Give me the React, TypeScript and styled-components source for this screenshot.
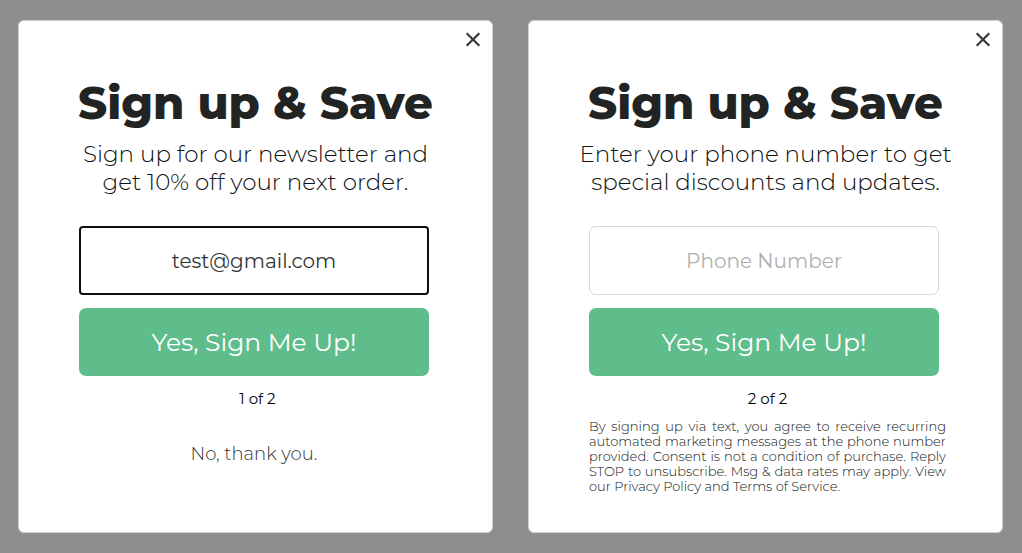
import React from "react";
import styled, { createGlobalStyle } from "styled-components";

const GlobalStyle = createGlobalStyle`
  *, *::before, *::after { box-sizing: border-box; }
  body {
    margin: 0;
    background: #8e8e8e;
    color: #222423;
    font-family: Montserrat, Inter, "Open Sans", sans-serif;
    font-weight: 300;
  }
`;

const Page = styled.main`
  display: grid;
  grid-template-columns: 1fr 1fr;
  gap: 35px;
  padding: 20px 19px 20px 18px;
`;

const Card = styled.section`
  display: flex;
  flex-direction: column;
  min-height: 513px;
  padding-bottom: 36px;
  background: #fff;
  border: 1px solid #d0d0d0;
  border-radius: 6px;
`;

const CardTop = styled.div`
  display: flex;
  justify-content: flex-end;
  padding: 10px 11px 0;
`;

const CloseButton = styled.button`
  display: flex;
  padding: 0;
  border: 0;
  background: none;
  color: #383838;
  cursor: pointer;
`;

const Title = styled.h1`
  margin: 28px 0 0;
  font-size: 45px;
  font-weight: 800;
  line-height: 56px;
  text-align: center;
  white-space: nowrap;
`;

const Subtitle = styled.p`
  margin: 9px 0 0;
  color: #101211;
  font-size: 23px;
  line-height: 28px;
  text-align: center;
  white-space: nowrap;
`;

const Body = styled.div`
  padding: 0 56px 0 60px;
`;

const Form = styled.form`
  display: flex;
  flex-direction: column;
  gap: 13px;
  margin: 30px 7px 0 0;
`;

const Field = styled.input<{ $active?: boolean }>`
  width: 100%;
  height: 69px;
  padding: 0 16px;
  border: ${(p) => (p.$active ? "2px solid #101010" : "1px solid #d8d8d8")};
  border-radius: ${(p) => (p.$active ? "4px" : "7px")};
  background: #fff;
  color: #333534;
  font: inherit;
  font-size: 20px;
  font-weight: 400;
  text-align: center;
  outline: none;

  &::placeholder {
    color: #b0b0b0;
    opacity: 1;
  }
`;

const SubmitButton = styled.button`
  height: 68px;
  border: 0;
  border-radius: 7px;
  background: #5fbd8c;
  color: #fff;
  font: inherit;
  font-size: 25px;
  font-weight: 400;
  cursor: pointer;
`;

const Step = styled.p`
  margin: 11px 0 0;
  color: #000;
  font-size: 15px;
  font-weight: 400;
  line-height: 24px;
  text-align: center;
`;

const DeclineRow = styled.div`
  display: flex;
  justify-content: center;
  margin: 31px 7px 0 0;
`;

const Decline = styled.button`
  padding: 0;
  border: 0;
  background: none;
  color: #333;
  font: inherit;
  font-size: 18px;
  line-height: 24px;
  cursor: pointer;
`;

const Legal = styled.p`
  margin: 8px 0 0;
  color: #101211;
  font-size: 13px;
  line-height: 15px;
  text-align: justify;
`;

type PopupProps = {
  subtitle: [string, string];
  step: string;
  field: React.ReactNode;
  children: React.ReactNode;
};

function Popup({ subtitle, step, field, children }: PopupProps) {
  return (
    <Card>
      <CardTop>
        <CloseButton type="button" aria-label="Close">
          <svg width="16" height="16" viewBox="0 0 16 16" aria-hidden="true">
            <path d="M1.7 2.2 L14.3 14.8 M14.3 2.2 L1.7 14.8" stroke="currentColor" strokeWidth="2.2" />
          </svg>
        </CloseButton>
      </CardTop>
      <Title>Sign up &amp; Save</Title>
      <Subtitle>
        {subtitle[0]}
        <br />
        {subtitle[1]}
      </Subtitle>
      <Body>
        <Form onSubmit={(e) => e.preventDefault()}>
          {field}
          <SubmitButton type="submit">Yes, Sign Me Up!</SubmitButton>
        </Form>
        <Step>{step}</Step>
        {children}
      </Body>
    </Card>
  );
}

export default function App() {
  return (
    <>
      <GlobalStyle />
      <Page>
        <Popup
          subtitle={["Sign up for our newsletter and", "get 10% off your next order."]}
          step="1 of 2"
          field={<Field $active type="email" aria-label="Email" defaultValue="test@gmail.com" />}
        >
          <DeclineRow>
            <Decline type="button">No, thank you.</Decline>
          </DeclineRow>
        </Popup>
        <Popup
          subtitle={["Enter your phone number to get", "special discounts and updates."]}
          step="2 of 2"
          field={<Field type="tel" aria-label="Phone Number" placeholder="Phone Number" />}
        >
          <Legal>
            By signing up via text, you agree to receive recurring automated marketing messages at the
            phone number provided. Consent is not a condition of purchase. Reply STOP to unsubscribe.
            Msg &amp; data rates may apply. View our Privacy Policy and Terms of Service.
          </Legal>
        </Popup>
      </Page>
    </>
  );
}
